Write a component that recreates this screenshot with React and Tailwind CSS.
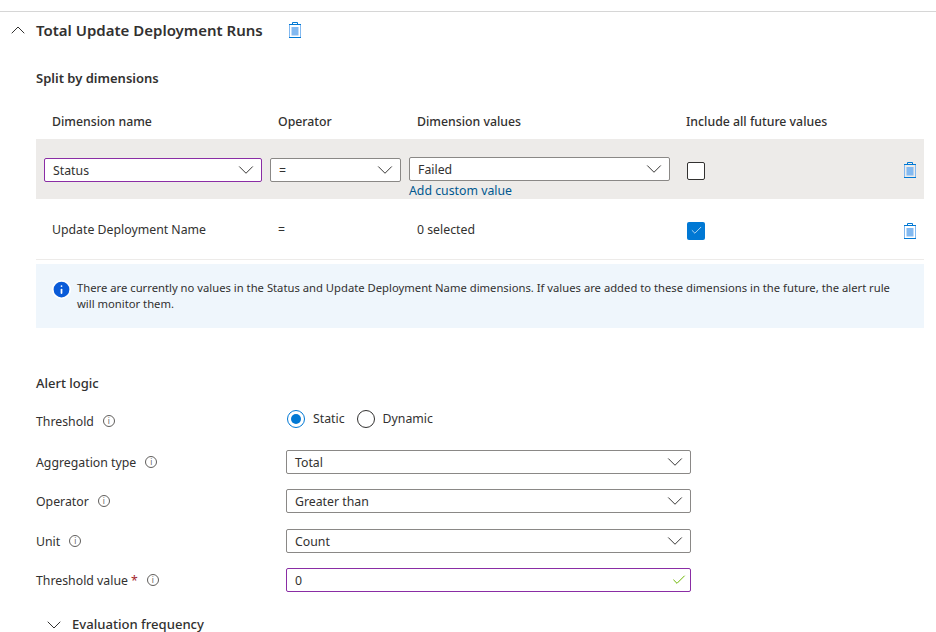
import { Check, ChevronDown, ChevronUp, Info } from "lucide-react";

const font = "font-['Noto_Sans','Open_Sans',sans-serif]";

const TrashIcon = () => (
  <svg width="14" height="18" viewBox="0 0 14 18" fill="none">
    <path d="M4.5 3V1.5h5V3" stroke="#0078d4" />
    <path d="M1 3.5h12" stroke="#0078d4" />
    <path d="M1.5 4v12.5h11V4" stroke="#83b9f0" />
    <rect x="3.5" y="6" width="7" height="8.5" fill="#83b9f0" />
    <path d="M1 16.5h12" stroke="#0078d4" />
  </svg>
);

const Hint = () => (
  <span className="flex h-[12px] w-[12px] items-center justify-center rounded-full border border-[#605e5c] text-[8px] leading-none text-[#605e5c]">
    i
  </span>
);

const Select = ({ value, focused, className }) => (
  <div
    className={`flex h-[24px] items-center justify-between rounded-[2px] border bg-white pl-[8px] pr-[2px] ${
      focused ? "border-[#8a2da5]" : "border-[#8a8886]"
    } ${className}`}
  >
    <span className="pt-[2px]">{value}</span>
    <ChevronDown size={26} strokeWidth={0.9} className="text-[#323130]" />
  </div>
);

const FormRow = ({ label, required, children, className }) => (
  <div className={`flex items-center ${className}`}>
    <div className="flex w-[250px] items-center gap-[9px]">
      <span className="pt-[2px]">
        {label}
        {required && <span className="text-[#a4262c]"> *</span>}
      </span>
      <Hint />
    </div>
    {children}
  </div>
);

export default function App() {
  return (
    <div className={`h-[632px] w-[936px] overflow-hidden bg-white pt-[11px] text-[12.3px] text-[#323130] ${font}`}>
      <div className="h-[1px] bg-[#d6d6d6]" />

      {/* Section header */}
      <div className="mt-[8px] flex h-[20px] items-center pl-[6px]">
        <ChevronUp size={24} strokeWidth={1} />
        <h2 className="ml-[6px] w-[252px] text-[15px] font-semibold">Total Update Deployment Runs</h2>
        <TrashIcon />
      </div>

      <div className="ml-[36px] mr-[12px]">
        <h3 className="mt-[29px] text-[13px] font-semibold leading-[18px]">Split by dimensions</h3>

        {/* Dimension table */}
        <div className="mt-[26px] grid h-[18px] grid-cols-[226px_139px_269px_1fr] items-center pl-[16px] font-medium">
          <span>Dimension name</span>
          <span>Operator</span>
          <span>Dimension values</span>
          <span>Include all future values</span>
        </div>

        <div className="mt-[8px] flex h-[60px] items-start bg-[#edebe9] pl-[8px] pt-[18px]">
          <Select value="Status" focused className="mt-[1px] w-[218px]" />
          <Select value="=" className="ml-[8px] mt-[1px] w-[131px]" />
          <div className="ml-[8px] w-[261px]">
            <Select value="Failed" />
            <div className="mt-[1px] text-[#00588f]">Add custom value</div>
          </div>
          <div className="ml-[17px] mt-[5px] h-[18px] w-[18px] rounded-[2px] border border-[#323130] bg-white" />
          <div className="ml-[198px] mt-[4px]">
            <TrashIcon />
          </div>
        </div>

        <div className="flex h-[61px] items-center border-b border-[#edebe9] pl-[16px]">
          <span className="w-[226px] pt-[2px]">Update Deployment Name</span>
          <span className="w-[139px] pt-[2px]">=</span>
          <span className="w-[270px] pt-[2px]">0 selected</span>
          <div className="mt-[3px] flex h-[18px] w-[18px] items-center justify-center rounded-[2px] bg-[#0078d4]">
            <Check size={13} strokeWidth={1.25} className="text-white" />
          </div>
          <div className="ml-[198px] mt-[3px]">
            <TrashIcon />
          </div>
        </div>

        {/* Info banner */}
        <div className="mt-[4px] flex h-[64px] bg-[#eff6fc] pl-[15px] pr-[30px] pt-[15px]">
          <Info size={21} fill="#0a5bd8" stroke="#ffffff" strokeWidth={2} className="shrink-0" />
          <p className="ml-[5px] mt-[1px] text-[11.25px] leading-[16px]">
            There are currently no values in the Status and Update Deployment Name dimensions. If values are added to these dimensions in the future, the alert rule will monitor them.
          </p>
        </div>

        {/* Alert logic */}
        <h3 className="mt-[46px] text-[13px] font-medium leading-[18px]">Alert logic</h3>

        <FormRow label="Threshold" className="mt-[19px] h-[20px]">
          <div className="-mt-[4px] ml-[1px] flex items-center">
            <span className="flex h-[18px] w-[18px] items-center justify-center rounded-full border border-[#0078d4] bg-white">
              <span className="h-[10px] w-[10px] rounded-full bg-[#0078d4]" />
            </span>
            <span className="ml-[8px]">Static</span>
            <span className="ml-[12px] h-[18px] w-[18px] rounded-full border border-[#323130] bg-white" />
            <span className="ml-[8px]">Dynamic</span>
          </div>
        </FormRow>

        <FormRow label="Aggregation type" className="mt-[19px]">
          <Select value="Total" className="w-[405px]" />
        </FormRow>
        <FormRow label="Operator" className="mt-[15px]">
          <Select value="Greater than" className="w-[405px]" />
        </FormRow>
        <FormRow label="Unit" className="mt-[16px]">
          <Select value="Count" className="w-[405px]" />
        </FormRow>
        <FormRow label="Threshold value" required className="mt-[15px]">
          <div className="flex h-[24px] w-[405px] items-center justify-between rounded-[2px] border border-[#8a2da5] bg-white pl-[8px] pr-[3px]">
            <span className="pt-[2px]">0</span>
            <Check size={16} strokeWidth={1.5} className="text-[#6bb700]" />
          </div>
        </FormRow>

        <div className="mt-[23px] flex h-[20px] items-center pl-[6px] text-[13.1px] font-medium">
          <ChevronDown size={24} strokeWidth={1} />
          <span className="ml-[6px]">Evaluation frequency</span>
        </div>
      </div>
    </div>
  );
}
